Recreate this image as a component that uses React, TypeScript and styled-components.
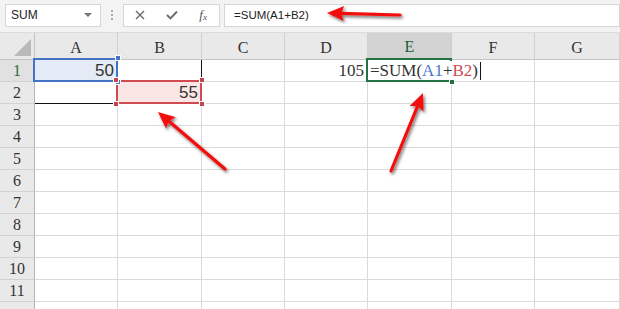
import React from "react";
import styled, { createGlobalStyle } from "styled-components";

const GlobalStyle = createGlobalStyle`
  html, body {
    margin: 0;
    padding: 0;
    background: #ffffff;
  }
  * {
    box-sizing: border-box;
  }
`;

const Frame = styled.div`
  position: relative;
  width: 620px;
  height: 309px;
  overflow: hidden;
  background: #ffffff;
  font-family: "Liberation Sans", Arial, sans-serif;
`;

const Toolbar = styled.div`
  display: flex;
  align-items: center;
  height: 33px;
  padding: 4px 0 6px 5px;
  background: #f3f3f3;
  border-bottom: 1px solid #dcdcdc;
`;

const Box = styled.div<{ $w?: number }>`
  display: flex;
  align-items: center;
  height: 23px;
  width: ${(p) => (p.$w ? `${p.$w}px` : "auto")};
  flex: ${(p) => (p.$w ? "none" : "1")};
  background: #ffffff;
  border: 1px solid #d6d6d6;
  font-size: 12px;
  color: #222;
`;

const NameText = styled.span`
  flex: 1;
  padding-left: 5px;
`;

const DropArrow = styled.span`
  width: 0;
  height: 0;
  margin-right: 8px;
  border-left: 4px solid transparent;
  border-right: 4px solid transparent;
  border-top: 4px solid #777;
`;

const Dots = styled.div`
  display: flex;
  flex-direction: column;
  gap: 2px;
  width: 22px;
  align-items: center;
  span {
    width: 2px;
    height: 2px;
    background: #a9a9a9;
  }
`;

const IconSlot = styled.div`
  flex: 1;
  display: flex;
  justify-content: center;
  align-items: center;
  color: #6b6b6b;
`;

const Fx = styled.span`
  font-family: "Liberation Serif", serif;
  font-style: italic;
  font-size: 13px;
  color: #555;
  sub {
    font-size: 9px;
    vertical-align: -1px;
  }
`;

const FormulaText = styled.span`
  padding-left: 9px;
  font-size: 11.5px;
`;

const Gap = styled.div<{ $w: number }>`
  width: ${(p) => p.$w}px;
  flex: none;
`;

const Grid = styled.div`
  display: grid;
  grid-template-columns: 35px 83px 84px 83px 83px 84px 83px 1fr;
  grid-template-rows: 27px;
  grid-auto-rows: 22px;
  font-family: "Liberation Serif", "DejaVu Serif", serif;
`;

const ColHead = styled.div<{ $active?: boolean }>`
  display: flex;
  align-items: center;
  justify-content: center;
  font-size: 16px;
  padding-top: 3px;
  color: ${(p) => (p.$active ? "#1e5b37" : "#333")};
  background: ${(p) => (p.$active ? "#d3d3d3" : "#e9e9e9")};
  border-right: 1px solid #d0d0d0;
  border-bottom: ${(p) => (p.$active ? "2px solid #217346" : "1px solid #c4c4c4")};
`;

const Corner = styled.div`
  position: relative;
  background: #e9e9e9;
  border-right: 1px solid #c4c4c4;
  border-bottom: 1px solid #c4c4c4;
  &::after {
    content: "";
    position: absolute;
    right: 3px;
    bottom: 3px;
    border-left: 17px solid transparent;
    border-bottom: 17px solid #b9b9b9;
  }
`;

const RowHead = styled.div<{ $active?: boolean }>`
  display: flex;
  align-items: center;
  justify-content: center;
  font-size: 16px;
  padding-top: 1px;
  color: ${(p) => (p.$active ? "#2f6b3a" : "#333")};
  background: ${(p) => (p.$active ? "#e1e1e1" : "#e9e9e9")};
  border-right: 1px solid #b4b4b4;
  border-bottom: 1px solid #d2d2d2;
`;

type Mark = "blue" | "red" | "green";

const markColor: Record<Mark, string> = {
  blue: "#4472c4",
  red: "#d04a52",
  green: "#217346",
};

const Cell = styled.div<{
  $fill?: string;
  $mark?: Mark;
  $right?: string;
  $bottom?: string;
  $sans?: boolean;
}>`
  position: relative;
  display: flex;
  align-items: center;
  justify-content: flex-end;
  padding-right: 3px;
  padding-top: 1px;
  font-size: 17px;
  font-family: ${(p) =>
    p.$sans ? `"Liberation Sans", Arial, sans-serif` : `"Liberation Serif", serif`};
  color: #333;
  white-space: nowrap;
  background: ${(p) => p.$fill || "transparent"};
  border-right: 1px solid ${(p) => p.$right || "#dadada"};
  border-bottom: 1px solid ${(p) => p.$bottom || "#dadada"};
  ${(p) =>
    p.$mark &&
    `
    &::after {
      content: "";
      position: absolute;
      left: -2px;
      top: -2px;
      right: -1px;
      bottom: -1px;
      border: 2px solid ${markColor[p.$mark]};
      pointer-events: none;
      z-index: 2;
    }
  `}
`;

const Handle = styled.span<{ $c: string; $x: "l" | "r"; $y: "t" | "b" }>`
  position: absolute;
  width: 6px;
  height: 6px;
  background: ${(p) => p.$c};
  border: 1px solid #fff;
  ${(p) => (p.$x === "l" ? "left: -5px;" : "right: -4px;")}
  ${(p) => (p.$y === "t" ? "top: -5px;" : "bottom: -4px;")}
  z-index: 3;
`;

const Editor = styled.span`
  position: absolute;
  left: 1px;
  top: 1px;
  bottom: 1px;
  display: flex;
  align-items: center;
  padding: 1px 0 0 1px;
  background: #ffffff;
  color: #333;
  font-size: 17px;
  z-index: 4;
  &::after {
    content: "";
    width: 1px;
    height: 18px;
    margin-left: 2px;
    background: #111;
  }
`;

const Ref = styled.span<{ $c: string }>`
  color: ${(p) => p.$c};
`;

const ArrowLayer = styled.svg`
  position: absolute;
  left: 0;
  top: 0;
  pointer-events: none;
  z-index: 10;
`;

const Arrow = ({ x1, y1, x2, y2 }: { x1: number; y1: number; x2: number; y2: number }) => {
  const dx = x2 - x1;
  const dy = y2 - y1;
  const len = Math.hypot(dx, dy);
  const ux = dx / len;
  const uy = dy / len;
  const hl = 17;
  const hw = 7.5;
  const bx = x2 - ux * hl;
  const by = y2 - uy * hl;
  const px = -uy;
  const py = ux;
  const pts = `${x2},${y2} ${bx + px * hw},${by + py * hw} ${bx + ux * 3},${by + uy * 3} ${bx - px * hw},${by - py * hw}`;
  return (
    <g filter="url(#shadow)">
      <line x1={x1} y1={y1} x2={bx + ux * 3} y2={by + uy * 3} stroke="#f41010" strokeWidth={3.2} strokeLinecap="round" />
      <polygon points={pts} fill="#f41010" />
    </g>
  );
};

const cols = ["A", "B", "C", "D", "E", "F", "G"];
// the 12th row only peeks in at the bottom edge, so its number is left out
const rows = Array.from({ length: 12 }, (_, i) => i + 1);

const App = () => {
  const renderCell = (r: number, c: number) => {
    const key = `${r}-${c}`;
    if (r === 1 && c === 0)
      return (
        <Cell key={key} $fill="#e4ebf6" $mark="blue" $sans>
          50
          <Handle $c="#4472c4" $x="r" $y="t" />
          <Handle $c="#4472c4" $x="r" $y="b" />
        </Cell>
      );
    if (r === 1 && c === 1) return <Cell key={key} $right="#111" />;
    if (r === 2 && c === 0) return <Cell key={key} $bottom="#111" />;
    if (r === 2 && c === 1)
      return (
        <Cell key={key} $fill="#fbe6e6" $mark="red" $sans>
          55
          <Handle $c="#c8434b" $x="l" $y="t" />
          <Handle $c="#c8434b" $x="r" $y="t" />
          <Handle $c="#c8434b" $x="l" $y="b" />
          <Handle $c="#c8434b" $x="r" $y="b" />
        </Cell>
      );
    if (r === 1 && c === 3) return <Cell key={key}>105</Cell>;
    if (r === 1 && c === 4)
      return (
        <Cell key={key} $mark="green">
          <Editor>
            =SUM(<Ref $c="#4a78c8">A1</Ref>+<Ref $c="#d04a52">B2</Ref>)
          </Editor>
          <Handle $c="#217346" $x="r" $y="b" />
        </Cell>
      );
    return <Cell key={key} />;
  };

  return (
    <Frame>
      <GlobalStyle />
      <Toolbar>
        <Box $w={96}>
          <NameText>SUM</NameText>
          <DropArrow />
        </Box>
        <Dots>
          <span />
          <span />
          <span />
        </Dots>
        <Box $w={97}>
          <IconSlot>
            <svg width="10" height="10" viewBox="0 0 10 10">
              <path d="M1 1 L9 9 M9 1 L1 9" stroke="#6b6b6b" strokeWidth="1.4" />
            </svg>
          </IconSlot>
          <IconSlot>
            <svg width="12" height="10" viewBox="0 0 12 10">
              <path d="M1 5 L4.5 8.5 L11 1.5" stroke="#6b6b6b" strokeWidth="1.9" fill="none" />
            </svg>
          </IconSlot>
          <IconSlot>
            <Fx>
              f<sub>x</sub>
            </Fx>
          </IconSlot>
        </Box>
        <Gap $w={4} />
        <Box>
          <FormulaText>=SUM(A1+B2)</FormulaText>
        </Box>
      </Toolbar>
      <Grid>
        <Corner />
        {cols.map((c) => (
          <ColHead key={c} $active={c === "E"}>
            {c}
          </ColHead>
        ))}
        {rows.map((r) => (
          <React.Fragment key={r}>
            <RowHead $active={r === 1}>{r < 12 ? r : ""}</RowHead>
            {cols.map((_, c) => renderCell(r, c))}
          </React.Fragment>
        ))}
      </Grid>
      <ArrowLayer width={620} height={309}>
        <defs>
          <filter id="shadow" x="-20%" y="-20%" width="140%" height="140%">
            <feDropShadow dx="1.5" dy="2" stdDeviation="1.5" floodColor="#000" floodOpacity="0.55" />
          </filter>
        </defs>
        <Arrow x1={400} y1={15} x2={327} y2={13} />
        <Arrow x1={225} y1={169} x2={158} y2={112} />
        <Arrow x1={391} y1={171} x2={423} y2={93} />
      </ArrowLayer>
    </Frame>
  );
};

export default App;
